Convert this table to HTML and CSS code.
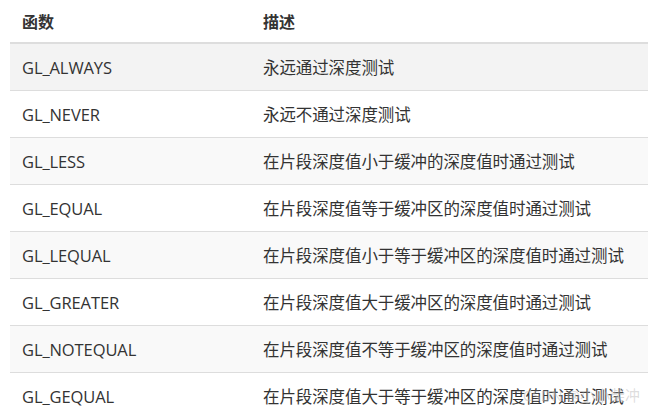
FILE: index.html
```html
<!DOCTYPE html>
<html lang="zh">
<head>
<meta charset="utf-8">
<link rel="stylesheet" href="styles.css">
</head>
<body>
<div class="wrap">
<table class="tbl">
  <thead>
    <tr><th class="c1">函数</th><th class="c2">描述</th></tr>
  </thead>
  <tbody>
    <tr class="hl"><td>GL_ALWAYS</td><td>永远通过深度测试</td></tr>
    <tr><td>GL_NEVER</td><td>永远不通过深度测试</td></tr>
    <tr class="alt"><td>GL_LESS</td><td>在片段深度值小于缓冲的深度值时通过测试</td></tr>
    <tr><td>GL_EQUAL</td><td>在片段深度值等于缓冲区的深度值时通过测试</td></tr>
    <tr class="alt"><td>GL_LEQUAL</td><td>在片段深度值小于等于缓冲区的深度值时通过测试</td></tr>
    <tr><td>GL_GREATER</td><td>在片段深度值大于缓冲区的深度值时通过测试</td></tr>
    <tr class="alt"><td>GL_NOTEQUAL</td><td>在片段深度值不等于缓冲区的深度值时通过测试</td></tr>
    <tr><td>GL_GEQUAL</td><td>在片段深度值大于等于缓冲区的深度值时通过测试</td></tr>
  </tbody>
</table>
<div class="mark">CSDN @小小柴冲</div>
</div>
</body>
</html>
```
FILE: styles.css
```css
html, body {
  margin: 0;
  padding: 0;
  background: #fff;
  overflow: hidden;
}
.wrap {
  position: relative;
  padding-left: 10px;
  width: 648px;
  height: 414px;
  box-sizing: border-box;
  overflow: hidden;
}
.tbl {
  border-collapse: collapse;
  width: 650px;
  font-family: "Open Sans", "Noto Sans CJK SC", sans-serif;
  font-size: 16.5px;
  color: #333;
}
.tbl th {
  text-align: left;
  font-weight: bold;
  font-size: 16px;
  height: 43px;
  padding: 0 12px;
  box-sizing: border-box;
  border-bottom: 2px solid #ddd;
  color: #333;
  vertical-align: middle;
}
.tbl .c1 { width: 241px; }
.tbl td {
  height: 46px;
  padding: 0 12px;
  border-bottom: 1px solid #ddd;
  vertical-align: middle;
  white-space: nowrap;
  font-weight: 400;
  letter-spacing: -0.1px;
}
.tbl tr.hl td { background: #f3f3f3; }
.tbl tr.alt td { background: #f9f9f9; }
.tbl tbody tr:last-child td { border-bottom: none; }
.mark {
  position: absolute;
  right: 8px;
  top: 384px;
  white-space: nowrap;
  font-family: "Open Sans", "Noto Sans CJK SC", sans-serif;
  font-size: 15px;
  line-height: 22px;
  color: rgba(140,140,140,0.3);
  text-shadow: 0 0 2px rgba(255,255,255,0.6);
}
```
